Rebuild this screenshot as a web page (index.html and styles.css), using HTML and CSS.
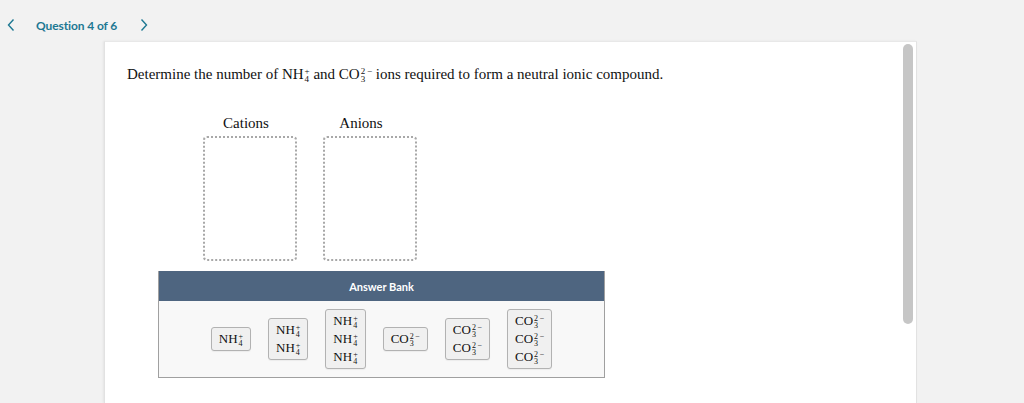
FILE: index.html
```html
<!DOCTYPE html>
<html>
<head>
<meta charset="utf-8">
<link rel="stylesheet" href="styles.css">
</head>
<body>
<div class="topbar">
  <svg class="chev" width="8" height="14" viewBox="0 0 8 14"><path d="M6.5 1.5 L1.5 7 L6.5 12.5" fill="none" stroke="#1d7892" stroke-width="1.4"/></svg>
  <span class="qtitle">Question 4 of 6</span>
  <svg class="chev next" width="8" height="14" viewBox="0 0 8 14"><path d="M1.5 1.5 L6.5 7 L1.5 12.5" fill="none" stroke="#1d7892" stroke-width="1.4"/></svg>
</div>
<div class="panel">
  <div class="content">
    <p class="question">Determine the number of NH<span class="ss"><span class="sp">+</span><span class="sb">4</span></span> and CO<span class="ss"><span class="sp">2&thinsp;&minus;</span><span class="sb">3</span></span> ions required to form a neutral ionic compound.</p>
    <div class="zones">
      <div class="zone">
        <div class="zlabel">Cations</div>
        <div class="zbox"></div>
      </div>
      <div class="zone">
        <div class="zlabel anion">Anions</div>
        <div class="zbox"></div>
      </div>
    </div>
    <div class="bank">
      <div class="bankhead">Answer Bank</div>
      <div class="bankbody">
        <div class="tile"><div>NH<span class="ss"><span class="sp">+</span><span class="sb">4</span></span></div></div>
        <div class="tile"><div>NH<span class="ss"><span class="sp">+</span><span class="sb">4</span></span></div><div>NH<span class="ss"><span class="sp">+</span><span class="sb">4</span></span></div></div>
        <div class="tile"><div>NH<span class="ss"><span class="sp">+</span><span class="sb">4</span></span></div><div>NH<span class="ss"><span class="sp">+</span><span class="sb">4</span></span></div><div>NH<span class="ss"><span class="sp">+</span><span class="sb">4</span></span></div></div>
        <div class="tile"><div>CO<span class="ss"><span class="sp">2&thinsp;&minus;</span><span class="sb">3</span></span></div></div>
        <div class="tile"><div>CO<span class="ss"><span class="sp">2&thinsp;&minus;</span><span class="sb">3</span></span></div><div>CO<span class="ss"><span class="sp">2&thinsp;&minus;</span><span class="sb">3</span></span></div></div>
        <div class="tile"><div>CO<span class="ss"><span class="sp">2&thinsp;&minus;</span><span class="sb">3</span></span></div><div>CO<span class="ss"><span class="sp">2&thinsp;&minus;</span><span class="sb">3</span></span></div><div>CO<span class="ss"><span class="sp">2&thinsp;&minus;</span><span class="sb">3</span></span></div></div>
      </div>
    </div>
  </div>
  <div class="scrollbar"><div class="thumb"></div></div>
</div>
</body>
</html>
```
FILE: styles.css
```css
html, body {
  margin: 0;
  padding: 0;
  background: #f2f2f2;
  height: 403px;
  overflow: hidden;
}
.topbar {
  height: 41px;
  display: flex;
  align-items: center;
  font-family: Lato, "Open Sans", sans-serif;
  color: #1d7892;
  padding: 9px 0 0 7px;
  box-sizing: border-box;
}
.chev {
  display: block;
}
.next {
  margin-left: 23px;
}
.qtitle {
  margin-left: 21px;
  font-size: 12px;
  font-weight: bold;
  letter-spacing: -0.1px;
}
.panel {
  margin-left: 104px;
  width: 813px;
  height: 362px;
  background: #fff;
  border-left: 1px solid #e2e2e2;
  border-top: 1px solid #e8e8e8;
  border-right: 1px solid #e2e2e2;
  box-sizing: border-box;
  display: flex;
  box-shadow: -1px 0 2px rgba(0,0,0,0.06);
}
.content {
  flex: 1;
  padding: 19px 0 0 22px;
  font-family: "Liberation Serif", "Times New Roman", serif;
  color: #111;
}
.question {
  margin: 0;
  font-size: 15px;
  line-height: 26px;
}
.ss {
  display: inline-block;
  vertical-align: -3px;
  font-size: 9px;
  line-height: 8px;
  margin-left: 1px;
  text-align: left;
}
.sp, .sb { display: block; }
.zones {
  display: flex;
  gap: 26px;
  margin-left: 76px;
  margin-top: 27px;
}
.zone {
  width: 94px;
  display: flex;
  flex-direction: column;
  align-items: center;
}
.zlabel {
  font-size: 15px;
  line-height: 18px;
  margin-bottom: 4px;
  padding-right: 8px;
}
.zlabel.anion {
  padding-right: 18px;
}
.zbox {
  width: 94px;
  height: 125px;
  border: 2px dotted #a8a8a8;
  border-radius: 4px;
  box-sizing: border-box;
}
.bank {
  margin-left: 31px;
  margin-top: 10px;
  width: 447px;
  border: 1px solid #a0a0a0;
  border-top: none;
  box-sizing: border-box;
  background: #f8f8f8;
}
.bankhead {
  height: 30px;
  background: #4e6580;
  color: #fff;
  font-family: Lato, "Open Sans", sans-serif;
  font-size: 11px;
  font-weight: bold;
  display: flex;
  align-items: center;
  justify-content: center;
}
.bankbody {
  height: 76px;
  display: flex;
  align-items: center;
  justify-content: center;
  gap: 17px;
}
.tile {
  border: 1px solid #b2b2b2;
  border-radius: 3px;
  background: #f0f0f0;
  padding: 2px 7px;
  font-size: 13px;
  line-height: 18px;
  display: flex;
  flex-direction: column;
  align-items: center;
  box-shadow: 0 1px 1px rgba(0,0,0,0.05);
}
.tile .ss {
  font-size: 8px;
  line-height: 7px;
  vertical-align: -3px;
}
.scrollbar {
  width: 12px;
  padding-top: 2px;
  margin-right: 1px;
}
.thumb {
  width: 10px;
  height: 280px;
  background: #c6c6c6;
  border-radius: 5px;
}
```
